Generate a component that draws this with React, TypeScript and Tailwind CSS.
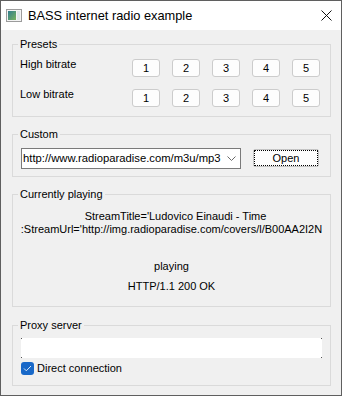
import React from 'react'

const font = { fontFamily: '"Liberation Sans", Arial, sans-serif' }

function AppIcon() {
  return (
    <svg width="16" height="13" viewBox="0 0 16 13" className="shrink-0">
      <defs>
        <linearGradient id="ig" x1="0" y1="0" x2="1" y2="1">
          <stop offset="0" stopColor="#2f7d8f" />
          <stop offset="1" stopColor="#79b35f" />
        </linearGradient>
      </defs>
      <rect x="0.5" y="0.5" width="15" height="12" fill="#f4f4f4" stroke="#9c9c9c" />
      <rect x="2" y="2" width="8" height="9" fill="url(#ig)" />
      <rect x="11" y="2" width="3" height="9" fill="#dfe6ea" />
    </svg>
  )
}

function CloseIcon() {
  return (
    <svg width="11" height="11" viewBox="0 0 11 11">
      <path d="M0.5 0.5 L10.5 10.5 M10.5 0.5 L0.5 10.5" stroke="#111" strokeWidth="1" fill="none" />
    </svg>
  )
}

function Group({
  title,
  className,
  children,
}: {
  title: string
  className: string
  children: React.ReactNode
}) {
  return (
    <fieldset className={`ml-[11px] w-[319px] border border-[#dadada] ${className}`}>
      <legend className="ml-[5px] px-[2px] text-[11px] leading-[13px] text-black">{title}</legend>
      {children}
    </fieldset>
  )
}

function PresetButton({ n }: { n: number }) {
  return (
    <button className="w-[28px] h-[18px] rounded-[3px] border border-[#cccccc] bg-[#fdfdfd] text-[11px] leading-[13px] text-black">
      {n}
    </button>
  )
}

function PresetRow({ label, className }: { label: string; className?: string }) {
  return (
    <div className={`flex items-start ${className ?? ''}`}>
      <div className="w-[119px] pl-[7px] text-[11px] leading-[13px] text-black">{label}</div>
      <div className="flex gap-[12px] mt-[1px]">
        {[1, 2, 3, 4, 5].map((n) => (
          <PresetButton key={n} n={n} />
        ))}
      </div>
    </div>
  )
}

export default function App() {
  return (
    <div
      style={font}
      className="w-[342px] h-[396px] border border-[#5f5f5f] bg-[#f0f0f0] flex flex-col overflow-hidden"
    >
      {/* Title bar */}
      <div className="h-[29px] bg-white flex items-center pl-[5px] pr-[9px] shrink-0">
        <AppIcon />
        <span className="ml-[6px] text-[12.8px] leading-[15px] text-black mt-[-1px]">
          BASS internet radio example
        </span>
        <div className="ml-auto mt-[-1px]">
          <CloseIcon />
        </div>
      </div>

      {/* Presets */}
      <Group title="Presets" className="mt-[8px] pb-[9px]">
        <PresetRow label="High bitrate" className="mt-[7px]" />
        <PresetRow label="Low bitrate" className="mt-[11px]" />
      </Group>

      {/* Custom */}
      <Group title="Custom" className="mt-[11px] pb-[7px]">
        <div className="flex items-start pl-[8px] pt-[7px] gap-[12px]">
          <div className="w-[220px] h-[21px] border border-[#7a7a7a] bg-white flex items-center pl-[1px] pr-[4px]">
            <span className="text-[11.25px] leading-[13px] text-black whitespace-nowrap overflow-hidden flex-1">
              http://www.radioparadise.com/m3u/mp3
            </span>
            <svg width="9" height="5" viewBox="0 0 9 5" className="ml-[4px]">
              <path d="M0.5 0.5 L4.5 4.5 L8.5 0.5" stroke="#6a6a6a" fill="none" />
            </svg>
          </div>
          <button className="mt-[1px] w-[66px] h-[18px] rounded-[2px] border border-[#c4c4c4] bg-[#fdfdfd] text-[11px] leading-[13px] text-black outline outline-1 outline-dotted outline-black -outline-offset-2">
            Open
          </button>
        </div>
      </Group>

      {/* Currently playing */}
      <Group title="Currently playing" className="mt-[11px] pb-[13px]">
        <div className="pt-[9px] text-[11px] leading-[13px] text-black text-center whitespace-nowrap">
          <div className="pl-[8px]">StreamTitle='Ludovico Einaudi - Time</div>
          <div>:StreamUrl='http://img.radioparadise.com/covers/l/B00AA2I2N</div>
          <div className="mt-[24px]">playing</div>
          <div className="mt-[7px]">HTTP/1.1 200 OK</div>
        </div>
      </Group>

      {/* Proxy server */}
      <Group title="Proxy server" className="mt-[12px] pb-[10px]">
        <div className="pl-[8px] pt-[6px]">
          <div className="relative w-[301px] h-[20px] bg-white">
            <span className="absolute left-0 top-0 w-px h-px bg-[#555]" />
            <span className="absolute right-0 top-0 w-px h-px bg-[#555]" />
            <span className="absolute left-0 bottom-0 w-px h-px bg-[#555]" />
            <span className="absolute right-0 bottom-0 w-px h-px bg-[#555]" />
          </div>
          <label className="mt-[4px] flex items-start gap-[3px]">
            <span className="w-[13px] h-[13px] rounded-[3px] bg-[#1868c8] flex items-center justify-center shrink-0">
              <svg width="9" height="7" viewBox="0 0 9 7">
                <path d="M1 3.5 L3.3 5.8 L8 1" stroke="#dbe8f8" strokeWidth="1" fill="none" />
              </svg>
            </span>
            <span className="text-[11px] leading-[13px] text-black">Direct connection</span>
          </label>
        </div>
      </Group>
    </div>
  )
}
